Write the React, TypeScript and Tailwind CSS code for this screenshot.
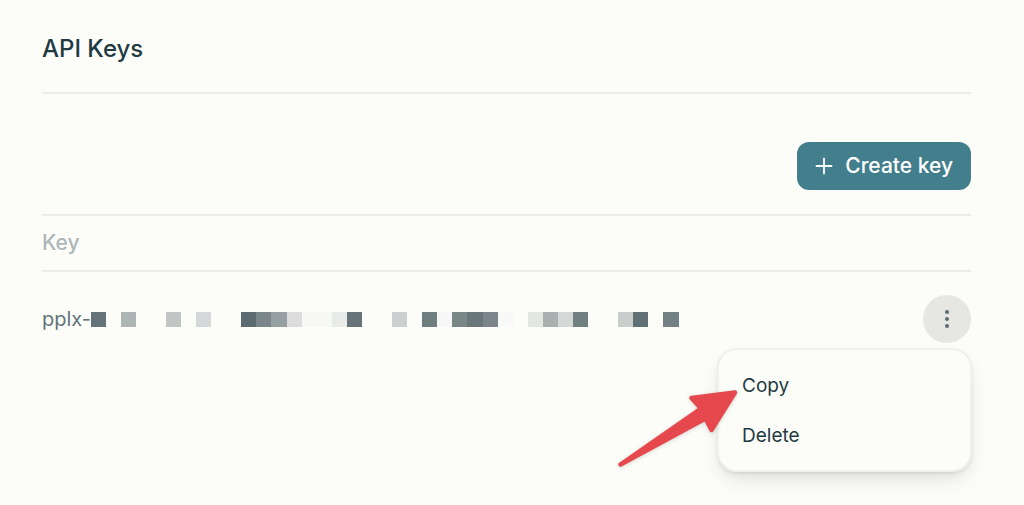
import { useState } from "react";

type Cell = { at: number; color: string };

// redacted part of the key, one entry per mosaic cell
const CELLS: Cell[] = [
  { at: 0, color: "#64737a" },
  { at: 2, color: "#aeb5b5" },
  { at: 5, color: "#c3c4c4" },
  { at: 7, color: "#d5d8d8" },
  { at: 10, color: "#5c6b6f" },
  { at: 11, color: "#7b868b" },
  { at: 12, color: "#969fa2" },
  { at: 13, color: "#dbdcdb" },
  { at: 14, color: "#f7f7f6" },
  { at: 15, color: "#f7f7f6" },
  { at: 16, color: "#e9ebe8" },
  { at: 17, color: "#667479" },
  { at: 20, color: "#cccfcf" },
  { at: 22, color: "#6f7e7e" },
  { at: 23, color: "#f7f7f7" },
  { at: 24, color: "#7a8787" },
  { at: 25, color: "#69777a" },
  { at: 26, color: "#7b858b" },
  { at: 27, color: "#f9f9f7" },
  { at: 29, color: "#e4e6e4" },
  { at: 30, color: "#a9b1b0" },
  { at: 31, color: "#d4d8d7" },
  { at: 32, color: "#708080" },
  { at: 35, color: "#cbcccc" },
  { at: 36, color: "#607075" },
  { at: 38, color: "#738084" },
];

function MaskedKey() {
  return (
    <svg
      width="588"
      height="15"
      viewBox="0 0 588 15"
      shapeRendering="crispEdges"
      className="shrink-0"
      aria-hidden="true"
    >
      {CELLS.map((c) => {
        const x = Math.floor((c.at * 588) / 39);
        const end = Math.floor(((c.at + 1) * 588) / 39);
        return <rect key={c.at} x={x} y="0" width={end - x} height="15" fill={c.color} />;
      })}
    </svg>
  );
}

function Arrow() {
  return (
    <svg
      width="126"
      height="84"
      viewBox="0 0 126 84"
      className="pointer-events-none absolute top-10 right-[231px] drop-shadow-sm"
      aria-hidden="true"
    >
      <path
        d="M5.5 76.5 L86 20.5 L76.5 10 L120 4.5 L96.5 42 L90.5 30.5 Z"
        fill="#e5484d"
        stroke="#e5484d"
        strokeWidth="4.5"
        strokeLinejoin="round"
      />
    </svg>
  );
}

export default function App() {
  const [open, setOpen] = useState(true);

  return (
    <main className="min-h-screen bg-[#fcfdf9] pt-[33px] pr-[53px] pb-8 pl-[42px] font-['Inter','Liberation_Sans',sans-serif] text-[#1f3a42]">
      <header className="border-b-2 border-[#ebece8] pb-[27px]">
        <h1 className="text-2xl font-medium">API Keys</h1>
      </header>

      <div className="flex justify-end pt-12 pb-6">
        <button
          type="button"
          className="flex h-12 items-center gap-3 rounded-xl bg-[#427e8b] px-[18px] text-[21px] font-medium text-white"
        >
          <svg width="18" height="18" viewBox="0 0 18 18" aria-hidden="true">
            <path d="M9 1.5v15M1.5 9h15" stroke="currentColor" strokeWidth="1.8" strokeLinecap="round" />
          </svg>
          Create key
        </button>
      </div>

      <table className="w-full border-collapse text-left">
        <thead>
          <tr className="border-y-2 border-[#ebece8]">
            <th className="h-14 p-0 text-[21px] font-medium text-[#aeb8b8]">Key</th>
          </tr>
        </thead>
        <tbody>
          <tr>
            <td className="px-0 pt-[23px] pb-6">
              <div className="flex items-center justify-between">
                <div className="flex items-center text-xl text-[#627479]">
                  pplx-
                  <MaskedKey />
                </div>
                <div className="relative">
                  <button
                    type="button"
                    aria-label="Key options"
                    aria-expanded={open}
                    onClick={() => setOpen(!open)}
                    className="flex size-12 items-center justify-center rounded-full bg-[#e6e7e2] text-[#5b6c70]"
                  >
                    <svg width="6" height="20" viewBox="0 0 6 20" fill="currentColor" aria-hidden="true">
                      <circle cx="3" cy="3" r="2" />
                      <circle cx="3" cy="10" r="2" />
                      <circle cx="3" cy="17" r="2" />
                    </svg>
                  </button>
                  {open && (
                    <div className="absolute top-full -right-px mt-[5px]">
                      <div className="flex w-[255px] flex-col rounded-[20px] border-2 border-[#f0f1ed] bg-[#fcfdf9] pt-[11px] pb-[9px] text-[19px] leading-[30px] shadow-[0_10px_20px_-4px_rgba(0,0,0,0.12),0_2px_4px_-1px_rgba(0,0,0,0.12)]">
                        <button type="button" className="px-[23px] py-2.5 text-left">
                          Copy
                        </button>
                        <button type="button" className="px-[23px] py-2.5 text-left">
                          Delete
                        </button>
                      </div>
                      <Arrow />
                    </div>
                  )}
                </div>
              </div>
            </td>
          </tr>
        </tbody>
      </table>
    </main>
  );
}
